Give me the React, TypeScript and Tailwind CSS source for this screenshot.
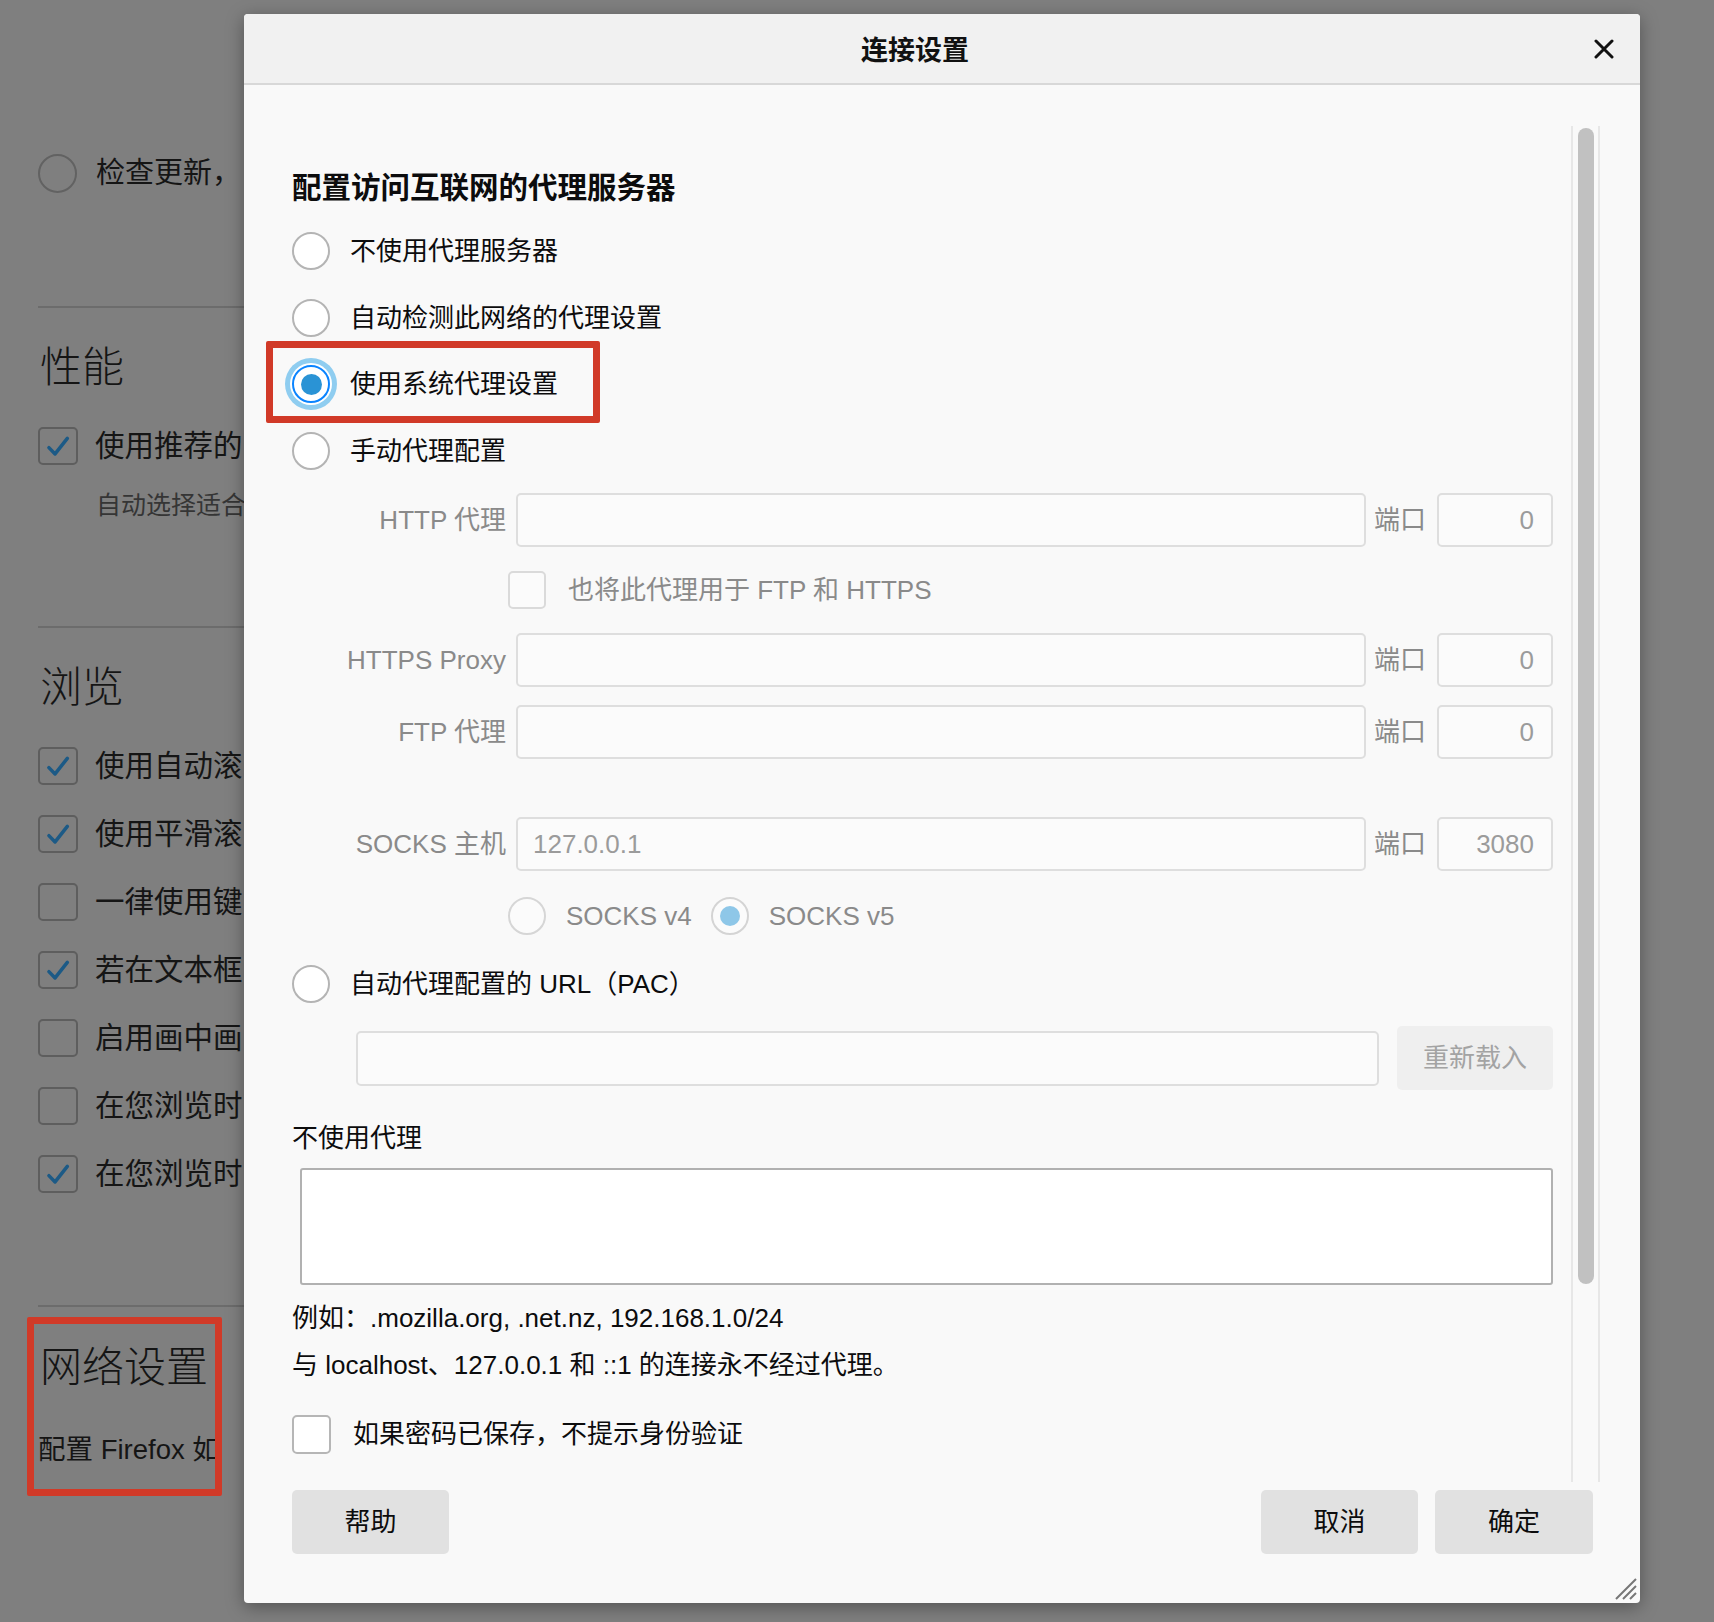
import * as React from "react"

function Check() {
    return (
        <svg viewBox="0 0 24 24" className="w-[28px] h-[28px]" fill="none">
            <path d="M4.2 13.4l5.3 5.4L20 5.4" stroke="#1c5a86" strokeWidth="3" strokeLinecap="round" strokeLinejoin="round" />
        </svg>
    )
}

function BgCheckbox({ checked, label }: { checked?: boolean; label: string }) {
    return (
        <div className="flex items-center h-[38px]">
            <div className="w-[40px] h-[38px] rounded-[5px] border-2 border-[#5e5e5e] flex items-center justify-center shrink-0">
                {checked && <Check />}
            </div>
            <span className="ml-[17px] text-[29.5px] leading-[38px] text-[#151515]">{label}</span>
        </div>
    )
}

function Radio({ state }: { state: "off" | "on" | "disabled" | "disabledOn" }) {
    if (state === "on") {
        return (
            <div className="w-[38px] h-[38px] rounded-full bg-white border-2 border-[#0a84ff] shadow-[0_0_0_2px_#ffffff,0_0_0_7px_#8fcdf0] flex items-center justify-center shrink-0">
                <div className="w-[21px] h-[21px] rounded-full bg-[#2a93d5]" />
            </div>
        )
    }
    if (state === "disabledOn") {
        return (
            <div className="w-[38px] h-[38px] rounded-full bg-[#fbfbfb] border-2 border-[#d4d4d4] flex items-center justify-center shrink-0">
                <div className="w-[20px] h-[20px] rounded-full bg-[#8ec7e8]" />
            </div>
        )
    }
    return (
        <div
            className={
                state === "disabled"
                    ? "w-[38px] h-[38px] rounded-full bg-[#fbfbfb] border-2 border-[#d6d6d6] shrink-0"
                    : "w-[38px] h-[38px] rounded-full bg-white border-2 border-[#b4b4b4] shrink-0"
            }
        />
    )
}

function RadioRow({ label, state = "off" }: { label: string; state?: "off" | "on" }) {
    return (
        <div className="flex items-center h-[38px]">
            <Radio state={state} />
            <span className="ml-[20px] text-[26px] leading-[38px] text-[#0c0c0d]">{label}</span>
        </div>
    )
}

function ProxyRow({ label, value, port }: { label: string; value?: string; port: string }) {
    return (
        <div className="flex items-center h-[54px]">
            <div className="w-[214px] text-right text-[26px] text-[#8a8a8a] leading-[54px] whitespace-nowrap">{label}</div>
            <div className="ml-[10px] flex-1 h-[54px] rounded-[5px] border-2 border-[#dedede] bg-[#fbfbfb] flex items-center pl-[15px] text-[26px] text-[#9b9b9b]">
                {value}
            </div>
            <div className="ml-[8px] w-[53px] text-[26px] text-[#8a8a8a] whitespace-nowrap">端口</div>
            <div className="ml-[10px] w-[116px] h-[54px] rounded-[5px] border-2 border-[#dedede] bg-[#fbfbfb] flex items-center justify-end pr-[17px] text-[26px] text-[#9b9b9b]">
                {port}
            </div>
        </div>
    )
}

function FooterButton({ label, className = "" }: { label: string; className?: string }) {
    return (
        <div className={"h-[64px] w-[157px] rounded-[5px] bg-[#e1e1e1] flex items-center justify-center text-[26px] text-[#0c0c0d] " + className}>
            {label}
        </div>
    )
}

export default function App() {
    return (
        <div className="relative w-[1714px] h-[1622px] bg-[#7f7f7f] overflow-hidden font-['Liberation_Sans','Noto_Sans_CJK_SC',sans-serif]">
            {/* page behind the dialog, only the part left of the dialog shows */}
            <div className="ml-[38px] pt-[154px] w-[206px] overflow-hidden whitespace-nowrap">
                <div className="flex items-center h-[39px]">
                    <div className="w-[39px] h-[39px] rounded-full border-2 border-[#626262] shrink-0" />
                    <span className="ml-[19px] text-[29px] leading-[39px] text-[#151515]">检查更新，</span>
                </div>
                <div className="mt-[113px] h-[2px] bg-[#6c6c6c]" />
                <div className="mt-[35px] text-[42px] leading-[50px] font-light text-[#151515] pl-[2px]">性能</div>
                <div className="mt-[34px]">
                    <BgCheckbox checked label="使用推荐的" />
                </div>
                <div className="mt-[22px] pl-[58px] text-[25px] leading-[36px] text-[#353535]">自动选择适合</div>
                <div className="mt-[103px] h-[2px] bg-[#6c6c6c]" />
                <div className="mt-[35px] text-[42px] leading-[50px] font-light text-[#151515] pl-[2px]">浏览</div>
                <div className="mt-[34px] flex flex-col gap-[30px]">
                    <BgCheckbox checked label="使用自动滚" />
                    <BgCheckbox checked label="使用平滑滚" />
                    <BgCheckbox label="一律使用键" />
                    <BgCheckbox checked label="若在文本框" />
                    <BgCheckbox label="启用画中画" />
                    <BgCheckbox label="在您浏览时" />
                    <BgCheckbox checked label="在您浏览时" />
                </div>
                <div className="mt-[112px] h-[2px] bg-[#6c6c6c]" />
                <div className="mt-[36px] text-[42px] leading-[50px] font-light text-[#151515] pl-[2px]">网络设置</div>
                <div className="mt-[39px] text-[27.5px] leading-[36px] text-[#151515]">配置 Firefox 如</div>
            </div>

            {/* annotation on the page */}
            <div className="absolute left-[27px] top-[1317px] w-[195px] h-[179px] border-[7px] border-[#d13a28] rounded-[2px]" />

            {/* dialog window */}
            <div className="absolute left-[244px] top-[14px] w-[1396px] h-[1589px] bg-[#f9f9f9] rounded-[4px] shadow-[0_4px_18px_rgba(0,0,0,0.35)] flex flex-col">
                <div className="h-[71px] shrink-0 bg-[#f1f1f1] border-b-2 border-[#d8d8d8] rounded-t-[4px] flex items-center pr-[54px] pt-[6px] relative">
                    <div className="flex-1 text-center text-[27px] font-bold text-[#111111]">连接设置</div>
                    <svg viewBox="0 0 20 20" className="absolute right-[26px] top-[25px] w-[20px] h-[20px]" fill="none">
                        <path d="M2 2L18 18M18 2L2 18" stroke="#111" strokeWidth="3" strokeLinecap="round" />
                    </svg>
                </div>

                {/* scroll area */}
                <div className="mt-[41px] h-[1356px] flex pl-[48px] pr-[40px] shrink-0">
                    <div className="flex-1 pr-[18px]">
                        <div className="mt-[44px] text-[29.5px] leading-[36px] font-bold text-[#0c0c0d]">配置访问互联网的代理服务器</div>
                        <div className="mt-[26px]">
                            <RadioRow label="不使用代理服务器" />
                        </div>
                        <div className="mt-[29px]">
                            <RadioRow label="自动检测此网络的代理设置" />
                        </div>
                        <div className="mt-[28px] relative">
                            <RadioRow label="使用系统代理设置" state="on" />
                            <div className="absolute left-[-26px] top-[-24px] w-[334px] h-[82px] border-[7px] border-[#d13a28] rounded-[2px]" />
                        </div>
                        <div className="mt-[29px]">
                            <RadioRow label="手动代理配置" />
                        </div>

                        <div className="mt-[23px]">
                            <ProxyRow label="HTTP 代理" port="0" />
                        </div>
                        <div className="mt-[24px] ml-[216px] flex items-center h-[38px]">
                            <div className="w-[38px] h-[38px] rounded-[5px] border-2 border-[#dadada] bg-[#fbfbfb]" />
                            <span className="ml-[22px] text-[26px] text-[#8a8a8a]">也将此代理用于 FTP 和 HTTPS</span>
                        </div>
                        <div className="mt-[24px]">
                            <ProxyRow label="HTTPS Proxy" port="0" />
                        </div>
                        <div className="mt-[18px]">
                            <ProxyRow label="FTP 代理" port="0" />
                        </div>
                        <div className="mt-[58px]">
                            <ProxyRow label="SOCKS 主机" value="127.0.0.1" port="3080" />
                        </div>
                        <div className="mt-[26px] ml-[216px] flex items-center h-[38px] text-[26px] text-[#8a8a8a]">
                            <Radio state="disabled" />
                            <span className="ml-[20px]">SOCKS v4</span>
                            <div className="ml-[19px]">
                                <Radio state="disabledOn" />
                            </div>
                            <span className="ml-[20px]">SOCKS v5</span>
                        </div>

                        <div className="mt-[30px]">
                            <RadioRow label="自动代理配置的 URL（PAC）" />
                        </div>
                        <div className="mt-[23px] ml-[64px] flex items-center h-[64px]">
                            <div className="flex-1 h-[55px] rounded-[5px] border-2 border-[#dedede] bg-[#fbfbfb]" />
                            <div className="ml-[18px] w-[156px] h-[64px] rounded-[5px] bg-[#efefef] flex items-center justify-center text-[26px] text-[#a3a3a3]">
                                重新载入
                            </div>
                        </div>

                        <div className="mt-[30px] text-[26px] leading-[36px] text-[#0c0c0d]">不使用代理</div>
                        <div className="mt-[12px] ml-[8px] h-[117px] rounded-[3px] border-2 border-[#b1b1b1] bg-white" />
                        <div className="mt-[15px] text-[26px] leading-[36px] text-[#0c0c0d]">例如：.mozilla.org, .net.nz, 192.168.1.0/24</div>
                        <div className="mt-[11px] text-[26px] leading-[36px] text-[#0c0c0d]">与 localhost、127.0.0.1 和 ::1 的连接永不经过代理。</div>
                        <div className="mt-[32px] flex items-center h-[38px]">
                            <div className="w-[39px] h-[39px] rounded-[5px] border-2 border-[#b6b6b6] bg-white shrink-0" />
                            <span className="ml-[22px] text-[26px] text-[#0c0c0d]">如果密码已保存，不提示身份验证</span>
                        </div>
                    </div>

                    {/* scrollbar */}
                    <div className="w-[29px] shrink-0 border-x-2 border-[#e7e7e7] pl-[5px] pt-[2px]">
                        <div className="w-[16px] h-[1156px] rounded-full bg-[#c1c1c1]" />
                    </div>
                </div>

                {/* footer */}
                <div className="mt-[8px] flex items-center pl-[48px] pr-[47px]">
                    <FooterButton label="帮助" />
                    <div className="flex-1" />
                    <FooterButton label="取消" />
                    <FooterButton label="确定" className="ml-[17px] w-[158px]" />
                </div>

                <svg viewBox="0 0 28 28" className="absolute right-[2px] bottom-[2px] w-[28px] h-[28px]" fill="none">
                    <path d="M26 6L6 26M26 13L13 26M26 20L20 26" stroke="#777" strokeWidth="2" />
                </svg>
            </div>
        </div>
    )
}
